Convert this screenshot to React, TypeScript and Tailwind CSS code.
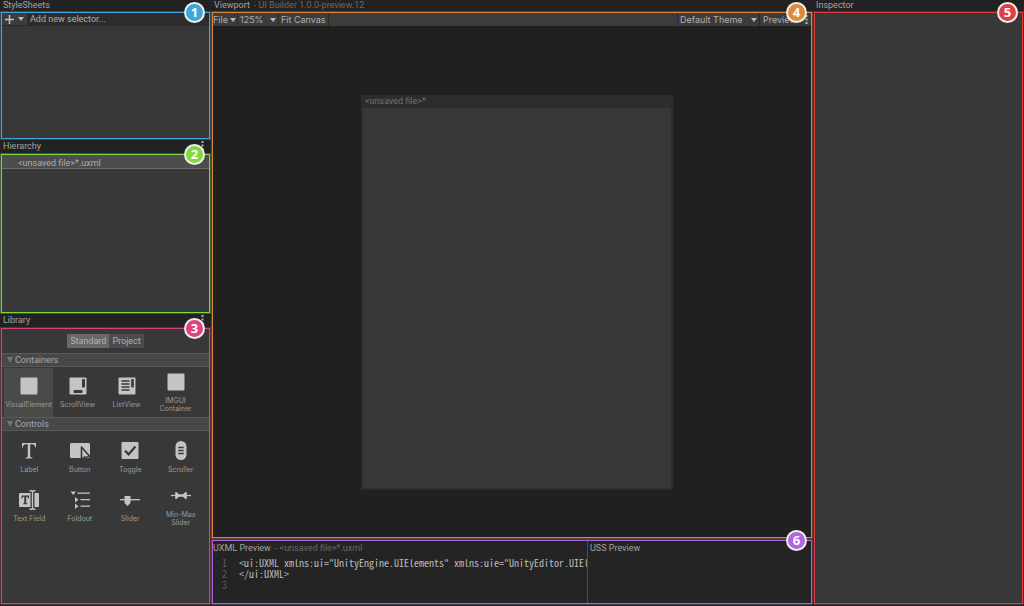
import React, { useState } from 'react';

interface LibraryItem {
  name: string;
  icon: React.ReactNode;
}

interface PaneHeaderProps {
  title: string;
  subtitle?: string;
  menu?: boolean;
  className?: string;
}

const Kebab: React.FC = () => (
  <svg width="3" height="9" viewBox="0 0 3 9" fill="#b4b4b4">
    <rect x="0.5" y="0" width="2" height="2" />
    <rect x="0.5" y="3.5" width="2" height="2" />
    <rect x="0.5" y="7" width="2" height="2" />
  </svg>
);

const Arrow: React.FC<{ className?: string }> = ({ className = '' }) => (
  <svg width="6" height="4" viewBox="0 0 6 4" className={className}>
    <path d="M0 0H6L3 4Z" fill="#b8b8b8" />
  </svg>
);

const Badge: React.FC<{ label: string; color: string }> = ({ label, color }) => (
  <span
    className={`absolute -top-[11px] right-1 z-10 flex h-[21px] w-[21px] items-center justify-center rounded-full border-2 border-[#eeeeee] font-['Open_Sans',sans-serif] text-[13px] leading-none font-bold text-white ${color}`}
  >
    {label}
  </span>
);

const PaneHeader: React.FC<PaneHeaderProps> = ({ title, subtitle, menu, className = 'h-[15px] pb-[2px]' }) => (
  <div className={`flex shrink-0 items-center px-[2px] text-[#a3a3a3] ${className}`}>
    <h2>{title}</h2>
    {subtitle && <span className="ml-1 text-[#6a6a6a]">{subtitle}</span>}
    {menu && (
      <button aria-label={`${title} menu`} className="mr-[4px] ml-auto">
        <Kebab />
      </button>
    )}
  </div>
);

const containers: LibraryItem[] = [
  {
    name: 'VisualElement',
    icon: <rect x="1.5" y="1.5" width="17" height="17" rx="1" />,
  },
  {
    name: 'ScrollView',
    icon: (
      <>
        <rect x="1.5" y="1.5" width="17" height="17" rx="1" />
        <rect x="14" y="3" width="3" height="8.5" rx="1" fill="#383838" />
        <rect x="5.5" y="14" width="9" height="3" rx="1" fill="#383838" />
      </>
    ),
  },
  {
    name: 'ListView',
    icon: (
      <>
        <rect x="1.5" y="1.5" width="17" height="17" rx="1" />
        <path d="M4.5 5H12.5M4.5 8H12.5M4.5 11H12.5M4.5 14H12.5" stroke="#383838" strokeWidth="1.3" />
        <rect x="14.2" y="3" width="2.6" height="8.5" rx="1" fill="#383838" />
      </>
    ),
  },
  {
    name: 'IMGUI Container',
    icon: <rect x="1.5" y="1.5" width="17" height="17" rx="1" />,
  },
];

const controls: LibraryItem[] = [
  {
    name: 'Label',
    icon: (
      <path d="M3 2H17V6.5H16.2C15.8 4.2 15 3.2 13 3.2H11.2V15C11.2 16.2 11.8 16.5 13.5 16.7V17.5H6.5V16.7C8.2 16.5 8.8 16.2 8.8 15V3.2H7C5 3.2 4.2 4.2 3.8 6.5H3Z" />
    ),
  },
  {
    name: 'Button',
    icon: (
      <>
        <rect x="0" y="2" width="20" height="15" rx="1.2" />
        <path
          d="M11.5 6V19L14.5 16L20 15.8Z"
          stroke="#383838"
          strokeWidth="1.6"
          strokeLinejoin="round"
        />
      </>
    ),
  },
  {
    name: 'Toggle',
    icon: (
      <>
        <rect x="1.5" y="1" width="17" height="17" rx="1" />
        <path d="M5 9.8L8.6 13.4L15.4 5.4" fill="none" stroke="#383838" strokeWidth="2.3" />
      </>
    ),
  },
  {
    name: 'Scroller',
    icon: (
      <>
        <rect x="4.5" y="0" width="11" height="19" rx="5.5" />
        <path d="M7.3 6.5H12.7M7.3 9.5H12.7M7.3 12.5H12.7" stroke="#383838" strokeWidth="1.3" />
      </>
    ),
  },
  {
    name: 'Text Field',
    icon: (
      <>
        <path d="M1 3H11.5V17H1Q0 17 0 16V4Q0 3 1 3ZM15.5 3H19Q20 3 20 4V16Q20 17 19 17H15.5Z" />
        <path d="M2.5 5.5H10V8.5H9.2C9 7.2 8.6 6.8 7.2 6.8V12.6C7.2 13.3 7.6 13.5 8.4 13.6V14.3H4.1V13.6C4.9 13.5 5.3 13.3 5.3 12.6V6.8C4 6.8 3.5 7.2 3.3 8.5H2.5Z" fill="#383838" />
        <path d="M10.5 0.7H12.5L13.5 1.5L14.5 0.7H16.5M10.5 19.3H12.5L13.5 18.5L14.5 19.3H16.5M13.5 1.5V18.5" fill="none" stroke="#c4c4c4" strokeWidth="1.4" />
      </>
    ),
  },
  {
    name: 'Foldout',
    icon: (
      <>
        <path d="M0.5 1.5H6L3.2 5ZM5 7L8.5 9.7L5 12.5ZM5 13.5L8.5 16.2L5 19Z" />
        <path d="M7.5 3.2H20M10.5 9.7H20M10.5 16.2H20" stroke="#c4c4c4" strokeWidth="1.3" />
      </>
    ),
  },
  {
    name: 'Slider',
    icon: (
      <>
        <path d="M0 9.7H20" stroke="#c4c4c4" strokeWidth="1.3" />
        <path d="M4.5 6H10.5V13L7.5 16L4.5 13Z" />
      </>
    ),
  },
  {
    name: 'Min-Max Slider',
    icon: (
      <>
        <path d="M0 9.5H20" stroke="#c4c4c4" strokeWidth="1.3" />
        <path d="M7 9.5H13" stroke="#c4c4c4" strokeWidth="2.4" />
        <path d="M4.2 6H5.5L8 8.2V10.8L5.5 13H4.2ZM15.8 6H14.5L12 8.2V10.8L14.5 13H15.8Z" />
      </>
    ),
  },
];

const LibraryTile: React.FC<{ item: LibraryItem; selected?: boolean }> = ({ item, selected }) => (
  <button
    className={`flex h-[49px] flex-col items-center justify-center gap-[5px] text-[7px] leading-[8px] text-[#9a9a9a] ${
      selected ? 'bg-[#4a4a4a]' : ''
    }`}
  >
    <svg width="20" height="20" viewBox="0 0 20 20" fill="#c4c4c4">
      {item.icon}
    </svg>
    {/* only the long multi-word names are allowed to break */}
    <span className={item.name.length > 13 ? 'w-9' : 'whitespace-nowrap'}>{item.name}</span>
  </button>
);

const SectionHeader: React.FC<{ title: string }> = ({ title }) => (
  <h3 className="border-y border-[#5a5a5a] bg-[#484848] text-[#a8a8a8]">
    <button className="flex h-3 w-full items-center gap-[2px] pl-[5px]">
      <svg width="6" height="6" viewBox="0 0 6 6">
        <path d="M0 0H6L3 6Z" fill="#767676" />
      </svg>
      {title}
    </button>
  </h3>
);

const StyleSheetsPane: React.FC = () => {
  const [selector, setSelector] = useState('');

  return (
    <section className="relative h-[127px] shrink-0 border border-[#3fa5dc] bg-[#383838] shadow-[0_0_0_1px_#3fa5dc50]">
      <Badge label="1" color="bg-[#3fa5dc]" />
      <div className="flex h-[13px] border-b border-[#2a2a2a] bg-[#3c3c3c]">
        <button aria-label="Add" className="flex w-[26px] items-center gap-1 border-r border-[#2a2a2a] pl-[3px]">
          <svg width="9" height="9" viewBox="0 0 9 9">
            <path d="M4.5 0V9M0 4.5H9" stroke="#c4c4c4" strokeWidth="1.5" />
          </svg>
          <Arrow />
        </button>
        <input
          type="text"
          aria-label="Selector"
          value={selector}
          onChange={(e) => setSelector(e.target.value)}
          placeholder="Add new selector..."
          className="min-w-0 flex-1 bg-[#2c2c2c] px-[2px] text-[#b8b8b8] outline-none placeholder:text-[#b0b0b0]"
        />
      </div>
    </section>
  );
};

const LibraryPane: React.FC = () => {
  const [tab, setTab] = useState('Standard');

  return (
    <section className="relative min-h-0 flex-1 border border-[#d5437c] bg-[#383838] shadow-[0_0_0_1px_#d5437c50]">
      <Badge label="3" color="bg-[#e0417f]" />
      <div className="flex justify-center py-[5px]">
        {['Standard', 'Project'].map((name) => (
          <button
            key={name}
            onClick={() => setTab(name)}
            className={`h-[14px] px-[3px] text-[#b0b0b0] ${tab === name ? 'bg-[#686868]' : 'bg-[#4c4c4c]'}`}
          >
            {name}
          </button>
        ))}
      </div>
      <SectionHeader title="Containers" />
      <div className="ml-[2px] grid w-[196px] grid-cols-4 pt-px font-['Inter',sans-serif]">
        {containers.map((item, i) => (
          <LibraryTile key={item.name} item={item} selected={i === 0} />
        ))}
      </div>
      <SectionHeader title="Controls" />
      <div className="ml-[2px] grid w-[202px] grid-cols-4 pt-[2px] font-['Inter',sans-serif]">
        {controls.map((item) => (
          <LibraryTile key={item.name} item={item} />
        ))}
      </div>
    </section>
  );
};

const ViewportPane: React.FC = () => (
  <section className="relative flex min-h-0 flex-1 flex-col border border-[#dd863b] bg-[#202020] shadow-[0_0_0_1px_#dd863b50]">
    <Badge label="4" color="bg-[#e08a3c]" />
    <div className="flex h-[13px] shrink-0 bg-[#3c3c3c] font-['Inter',sans-serif] text-[#b0b0b0]">
      <button className="flex w-[25px] items-center gap-[2px] border-r border-[#2a2a2a]">
        File
        <Arrow />
      </button>
      <div className="relative w-[41px] border-r border-[#2a2a2a]">
        <select aria-label="Zoom" className="block h-full w-full appearance-none pl-[2px]">
          <option>125%</option>
          <option>100%</option>
        </select>
        <Arrow className="pointer-events-none absolute top-[5px] right-[2px]" />
      </div>
      <button className="border-r border-[#2a2a2a] px-[2px] whitespace-nowrap">Fit Canvas</button>
      <div className="relative ml-auto w-[83px] border-x border-[#2a2a2a]">
        <select aria-label="Theme" className="block h-full w-full appearance-none pl-[2px]">
          <option>Default Theme</option>
        </select>
        <Arrow className="pointer-events-none absolute top-[5px] right-[2px]" />
      </div>
      <button className="w-[42px] border-r border-[#2a2a2a] pl-[3px] text-left">Preview</button>
      <button aria-label="Viewport menu" className="flex w-[9px] items-center justify-center">
        <Kebab />
      </button>
    </div>
    <div className="flex flex-1 items-center justify-center pt-[22px] pl-[10px]">
      <div className="flex h-[395px] w-[312px] flex-col border-x-2 border-b-2 border-[#2d2d2d] bg-[#383838]">
        <div className="h-[13px] bg-[#2d2d2d] px-[2px] leading-[13px] text-[#707070]">&lt;unsaved file&gt;*</div>
      </div>
    </div>
  </section>
);

const codeLines = [
  '<ui:UXML xmlns:ui="UnityEngine.UIElements" xmlns:uie="UnityEditor.UIElements">',
  '</ui:UXML>',
  '',
];

const PreviewPane: React.FC = () => (
  <section className="relative grid h-16 shrink-0 grid-cols-[1fr_223px] border border-[#a862de] bg-[#242424] shadow-[0_0_0_1px_#a862de50]">
    <Badge label="6" color="bg-[#b067e4]" />
    <div className="min-w-0 overflow-hidden border-r border-[#4a4a4a]">
      <PaneHeader title="UXML Preview" subtitle="- <unsaved file>*.uxml" className="-ml-[2px] h-[13px]" />
      <pre className="pt-[3px] font-['Noto_Sans_Mono_CJK_SC','DejaVu_Sans_Mono',monospace] text-[10px] leading-[11px] text-[#bcbcbc]">
        {codeLines.map((line, i) => (
          <div key={i} className="flex h-[11px] gap-3">
            <span className="w-[14px] shrink-0 text-right text-[#5c5c5c]">{i + 1}</span>
            <code className="font-[inherit]">{line}</code>
          </div>
        ))}
      </pre>
    </div>
    <div className="min-w-0">
      <PaneHeader title="USS Preview" className="h-[13px]" />
    </div>
  </section>
);

const App: React.FC = () => {
  return (
    <main className="flex h-screen gap-[2px] overflow-hidden bg-[#222222] px-px pb-[2px] font-['Roboto',sans-serif] text-[9px] leading-[12px]">
      {/* Left column */}
      <div className="flex w-[209px] shrink-0 flex-col">
        <PaneHeader title="StyleSheets" className="h-3 pb-[2px]" />
        <StyleSheetsPane />
        <PaneHeader title="Hierarchy" menu />
        <section className="relative h-[159px] shrink-0 border border-[#7fd63f] bg-[#383838] shadow-[0_0_0_1px_#7fd63f50]">
          <Badge label="2" color="bg-[#80d940]" />
          <div className="h-[14px] border-b border-[#6a6a6a] bg-[#4d4d4d] pl-4 leading-[16px] text-[#acacac]">
            &lt;unsaved file&gt;*.uxml
          </div>
        </section>
        <PaneHeader title="Library" menu />
        <LibraryPane />
      </div>

      {/* Viewport and code previews */}
      <div className="flex min-w-0 flex-1 flex-col">
        <PaneHeader title="Viewport" subtitle="- UI Builder 1.0.0-preview.12" className="h-3 pb-[2px]" />
        <ViewportPane />
        <div className="h-[2px] shrink-0" />
        <PreviewPane />
      </div>

      {/* Inspector */}
      <div className="flex w-[209px] shrink-0 flex-col">
        <PaneHeader title="Inspector" className="h-3 pb-[2px]" />
        <section className="relative flex-1 border border-[#dd3c3c] bg-[#383838] shadow-[0_0_0_1px_#dd3c3c50]">
          <Badge label="5" color="bg-[#df3f42]" />
        </section>
      </div>
    </main>
  );
};

export default App;
